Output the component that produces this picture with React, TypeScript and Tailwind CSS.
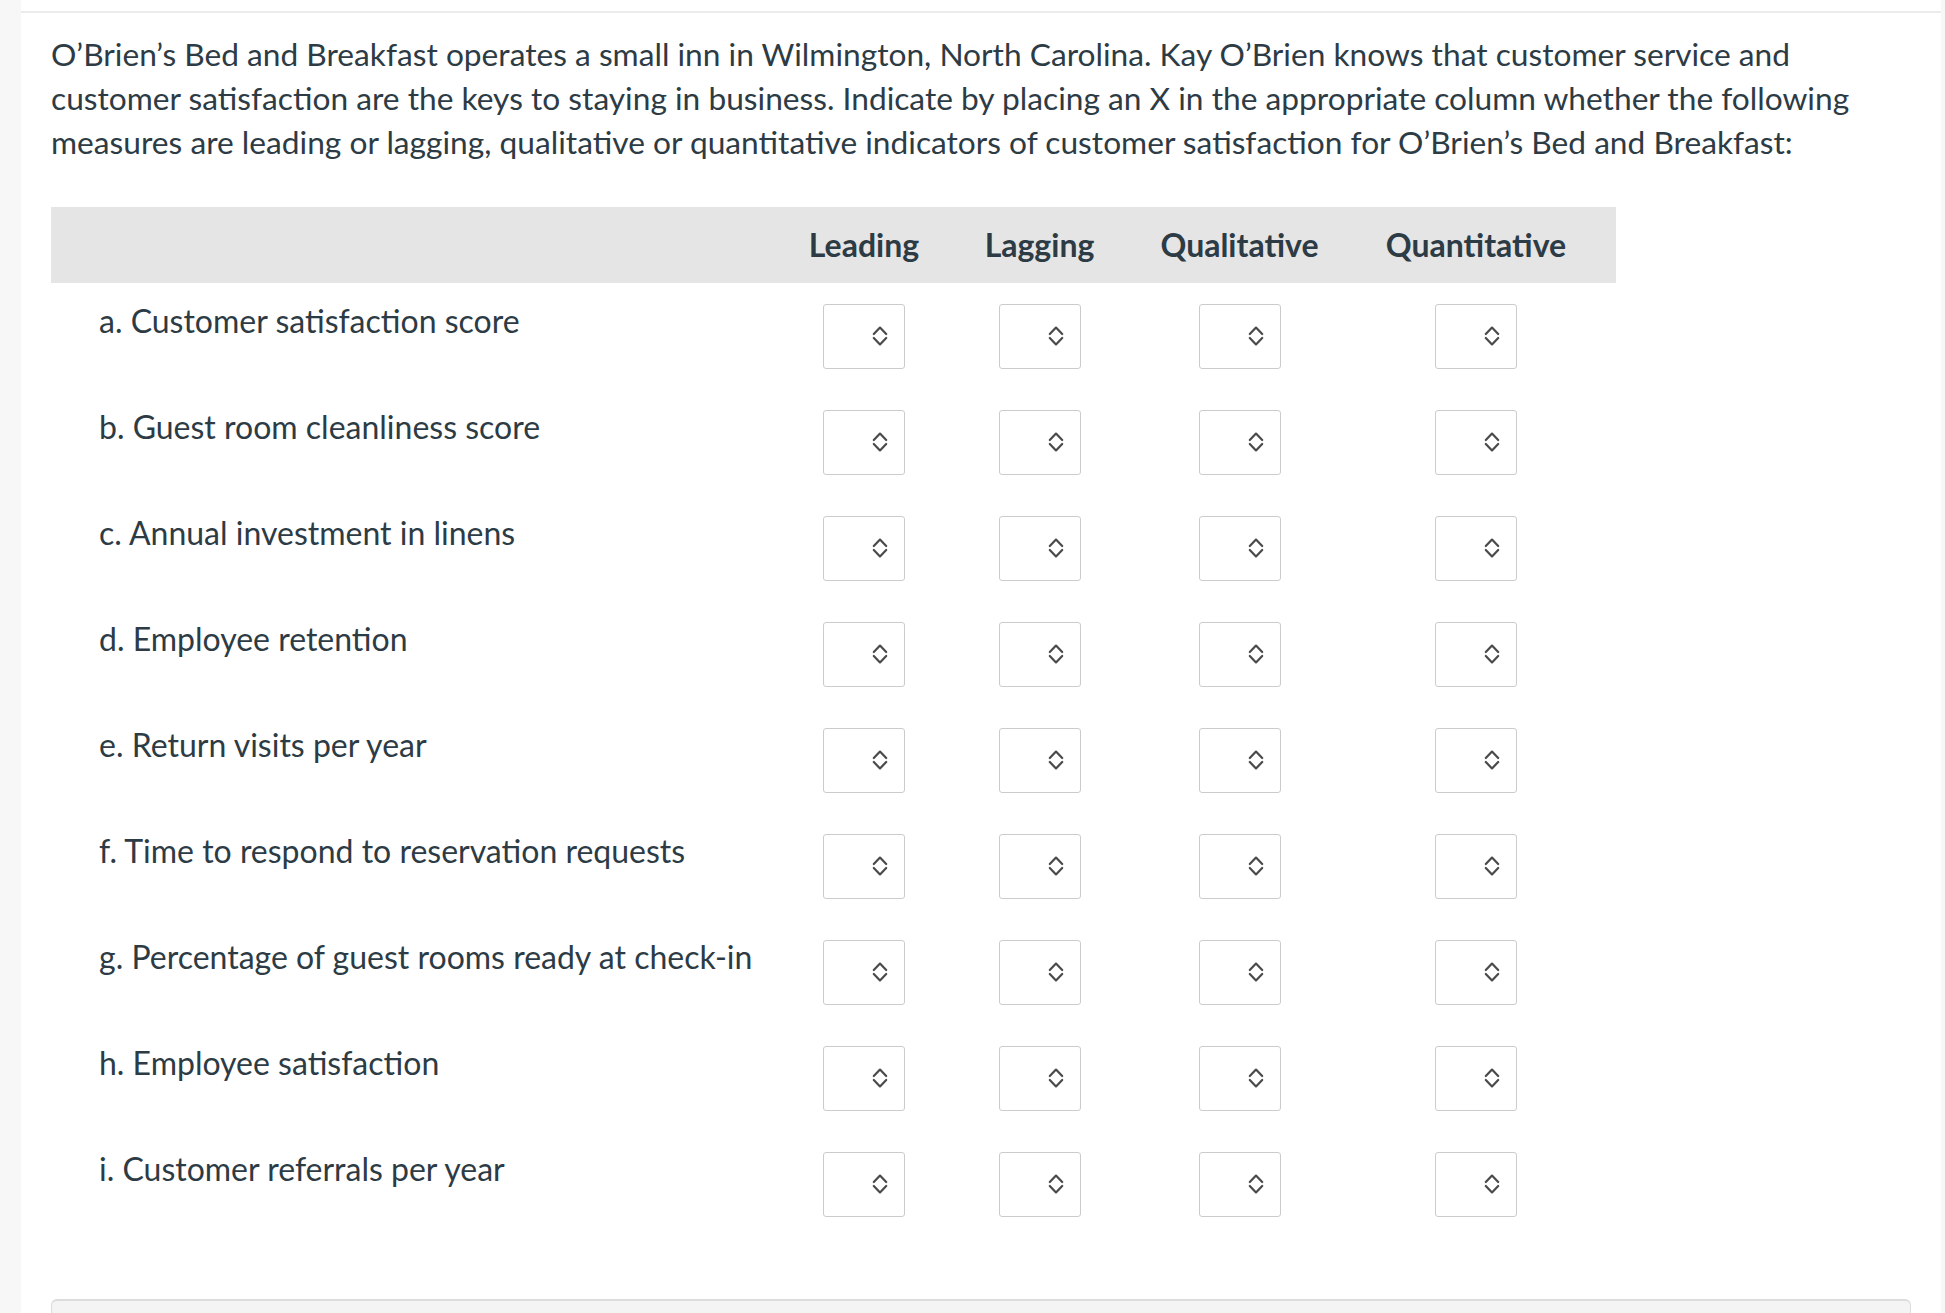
import React from "react";

const rows = [
  "a. Customer satisfaction score",
  "b. Guest room cleanliness score",
  "c. Annual investment in linens",
  "d. Employee retention",
  "e. Return visits per year",
  "f. Time to respond to reservation requests",
  "g. Percentage of guest rooms ready at check-in",
  "h. Employee satisfaction",
  "i. Customer referrals per year",
];

const columns = [
  { label: "Leading", width: "w-[176px]" },
  { label: "Lagging", width: "w-[175px]" },
  { label: "Qualitative", width: "w-[225px]" },
  { label: "Quantitative", width: "w-[248px]" },
];

function SelectBox() {
  return (
    <div className="relative h-[65px] w-[82px] rounded-[3px] border-[1.5px] border-[#cccccc] bg-white">
      <svg
        className="absolute right-[16px] top-[20px]"
        width="16"
        height="22"
        viewBox="0 0 16 22"
        fill="none"
        stroke="#4a4a4a"
        strokeWidth="2.2"
        strokeLinecap="round"
        strokeLinejoin="round"
      >
        <path d="M1.8 9 L8 2.6 L14.2 9" />
        <path d="M1.8 13 L8 19.4 L14.2 13" />
      </svg>
    </div>
  );
}

export default function App() {
  return (
    <div className="min-h-screen bg-[#f7f7f7] pl-[21px] pr-[4px] font-['Lato',sans-serif] text-[#2d3b45]">
      <div className="min-h-[1313px] bg-white">
        <div className="h-[11px]" />
        <div className="h-[2px] bg-[#ececec]" />
        <div className="px-[30px]">
          <p className="pt-[19px] text-[31.7px] leading-[44px]">
            O’Brien’s Bed and Breakfast operates a small inn in Wilmington, North Carolina. Kay O’Brien knows that
            customer service and customer satisfaction are the keys to staying in business. Indicate by placing an X
            in the appropriate column whether the following measures are leading or lagging, qualitative or
            quantitative indicators of customer satisfaction for O’Brien’s Bed and Breakfast:
          </p>

          <div className="mt-[43px] w-[1565px]">
            <div className="flex h-[76px] items-center bg-[#e5e5e5]">
              <div className="w-[725px]" />
              {columns.map((c) => (
                <div key={c.label} className={`${c.width} text-center text-[32px] font-bold`}>
                  {c.label}
                </div>
              ))}
              <div className="w-[16px]" />
            </div>

            {rows.map((r) => (
              <div key={r} className="flex h-[106px] pt-[21px]">
                <div className="w-[725px] pl-[48px] text-[32px] leading-[34px]">{r}</div>
                {columns.map((c) => (
                  <div key={c.label} className={`${c.width} flex justify-center`}>
                    <SelectBox />
                  </div>
                ))}
              </div>
            ))}
          </div>

          <div className="mt-[62px] h-[40px] rounded-t-[6px] border-t-2 border-x border-[#dcdcdc] bg-[#f4f4f4]" />
        </div>
      </div>
    </div>
  );
}
